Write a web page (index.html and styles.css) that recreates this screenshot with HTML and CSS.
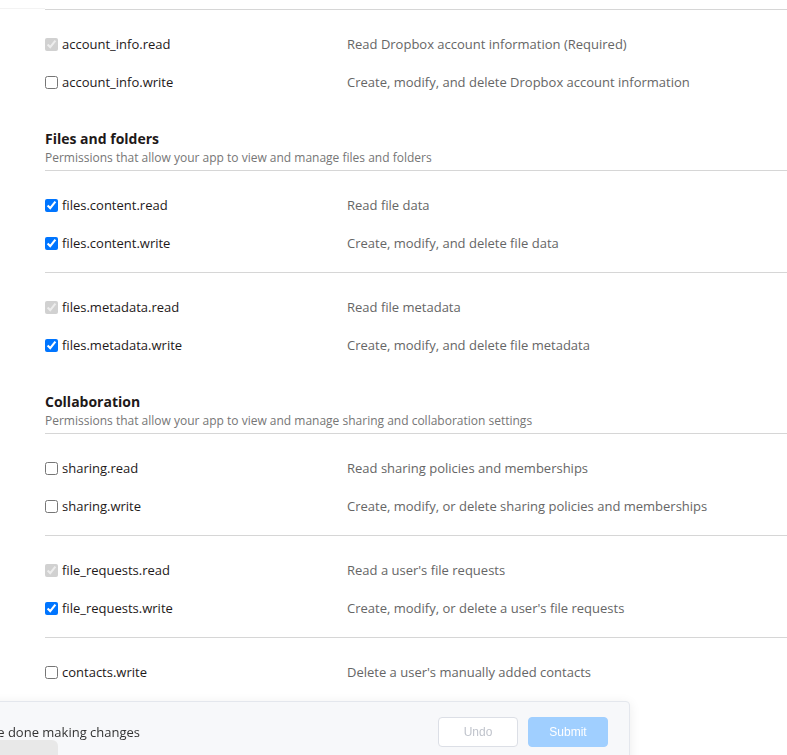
FILE: index.html
```html
<!DOCTYPE html>
<html>
<head>
<meta charset="utf-8">
<link rel="stylesheet" href="styles.css">
</head>
<body>
<div class="page">
  <div class="topfade"></div>
  <section class="section first">
    <div class="group">
      <div class="row"><label class="name"><input type="checkbox" checked disabled><span>account_info.read</span></label><span class="desc">Read Dropbox account information (Required)</span></div>
      <div class="row"><label class="name"><input type="checkbox"><span>account_info.write</span></label><span class="desc">Create, modify, and delete Dropbox account information</span></div>
    </div>
  </section>

  <section class="section">
    <header class="head">
      <h3>Files and folders</h3>
      <p>Permissions that allow your app to view and manage files and folders</p>
    </header>
    <div class="group">
      <div class="row"><label class="name"><input type="checkbox" checked><span>files.content.read</span></label><span class="desc">Read file data</span></div>
      <div class="row"><label class="name"><input type="checkbox" checked><span>files.content.write</span></label><span class="desc">Create, modify, and delete file data</span></div>
    </div>
    <div class="group">
      <div class="row"><label class="name"><input type="checkbox" checked disabled><span>files.metadata.read</span></label><span class="desc">Read file metadata</span></div>
      <div class="row"><label class="name"><input type="checkbox" checked><span>files.metadata.write</span></label><span class="desc">Create, modify, and delete file metadata</span></div>
    </div>
  </section>

  <section class="section">
    <header class="head">
      <h3>Collaboration</h3>
      <p>Permissions that allow your app to view and manage sharing and collaboration settings</p>
    </header>
    <div class="group">
      <div class="row"><label class="name"><input type="checkbox"><span>sharing.read</span></label><span class="desc">Read sharing policies and memberships</span></div>
      <div class="row"><label class="name"><input type="checkbox"><span>sharing.write</span></label><span class="desc">Create, modify, or delete sharing policies and memberships</span></div>
    </div>
    <div class="group">
      <div class="row"><label class="name"><input type="checkbox" checked disabled><span>file_requests.read</span></label><span class="desc">Read a user's file requests</span></div>
      <div class="row"><label class="name"><input type="checkbox" checked><span>file_requests.write</span></label><span class="desc">Create, modify, or delete a user's file requests</span></div>
    </div>
    <div class="group">
      <div class="row"><label class="name"><input type="checkbox"><span>contacts.write</span></label><span class="desc">Delete a user's manually added contacts</span></div>
    </div>
  </section>
</div>

<div class="savebar">
  <span class="savetext">You're done making changes</span>
  <div class="actions">
    <button class="btn btn-plain" disabled>Undo</button>
    <button class="btn btn-primary" disabled>Submit</button>
  </div>
</div>
<div class="cornerbox"></div>
</body>
</html>
```

FILE: styles.css
```css
html, body {
  margin: 0;
  padding: 0;
  background: #fff;
  overflow: hidden;
}
body {
  font-family: "Open Sans", "Noto Sans", sans-serif;
  color: #1e1919;
  height: 755px;
}
.page {
  padding: 9px 0 0 45px;
  position: relative;
}
.topfade {
  position: absolute;
  left: 0;
  top: 8px;
  width: 45px;
  height: 1px;
  background: #f3f3f3;
}
.section.first {
  border-top: 1px solid #d6d6d6;
}
.section {
  margin-bottom: 18px;
}
.head {
  border-bottom: 1px solid #d6d6d6;
  padding-bottom: 4px;
}
.head h3 {
  margin: 0;
  font-size: 14px;
  line-height: 20px;
  font-weight: 700;
}
.head p {
  margin: 1px 0 0;
  font-size: 12px;
  line-height: 16px;
  color: #767676;
}
.group {
  padding: 15px 0 10px;
}
.group + .group {
  border-top: 1px solid #d6d6d6;
}
.row {
  display: flex;
  align-items: center;
  height: 38px;
  font-size: 13px;
}
.name {
  width: 302px;
  display: flex;
  align-items: center;
  gap: 4px;
}
.name input {
  margin: 0;
  width: 13px;
  height: 13px;
}
.desc {
  color: #666;
}
.savebar {
  position: fixed;
  left: -40px;
  top: 701px;
  width: 670px;
  height: 70px;
  background: #f7f8fa;
  border: 1px solid #e4e7ed;
  border-radius: 4px;
  box-shadow: 0 2px 12px rgba(0, 0, 0, 0.08);
  box-sizing: border-box;
  display: flex;
  align-items: flex-start;
  justify-content: space-between;
  padding: 15px 21px 0 5px;
}
.savetext {
  font-size: 13px;
  line-height: 30px;
  color: #333;
}
.actions {
  display: flex;
  gap: 10px;
}
.btn {
  width: 80px;
  height: 30px;
  border-radius: 4px;
  font-family: "Liberation Sans", Arial, sans-serif;
  font-size: 12px;
  font-weight: 500;
  box-sizing: border-box;
  padding: 0;
}
.btn-plain {
  background: #fff;
  border: 1px solid #dcdfe6;
  color: #c0c4cc;
}
.btn-primary {
  background: #a0cfff;
  border: 1px solid #a0cfff;
  color: #fff;
}
.cornerbox {
  position: fixed;
  left: 0;
  top: 740px;
  width: 58px;
  height: 20px;
  background: #e8e8e8;
  border-radius: 0 6px 0 0;
}
```
